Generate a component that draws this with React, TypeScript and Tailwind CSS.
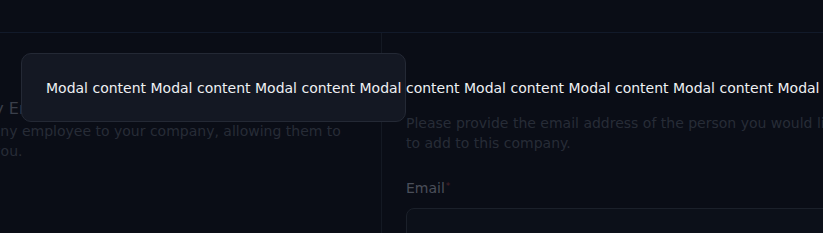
export default function App() {
  const repeated = Array.from({ length: 9 }, () => "Modal content").join(" ");

  return (
    <div className="relative h-[233px] w-full overflow-hidden bg-[#0a0d16] font-['DejaVu_Sans',sans-serif]">
      {/* Top bar */}
      <header className="h-[33px] border-b border-[#121a2a]" />

      {/* Form body */}
      <main className="flex">
        <section className="ml-[-52px] w-[434px] shrink-0 border-r border-[#141923] pr-6 pt-16">
          <h2 className="text-base leading-6 text-[#3a3f4a]">Add by Email</h2>
          <p className="text-sm leading-5 text-[#272c37]">
            Invite any employee to your company, allowing them to assist you.
          </p>
        </section>

        <section className="w-[470px] shrink-0 pl-6 pt-20">
          <p className="w-[440px] text-sm leading-5 text-[#272c37]">
            Please provide the email address of the person you would like to add to this company.
          </p>
          <label className="mt-[25px] block text-sm leading-5 text-[#4a4f5a]">
            Email<sup className="ml-px text-[9px] text-[#4a2229]">*</sup>
          </label>
          <div className="mt-[10px] h-10 rounded-lg border border-[#1b202a] bg-[#0c1019]" />
        </section>
      </main>

      {/* Modal overlay */}
      <div className="absolute left-[21px] top-[53px] flex h-[69px] w-[385px] items-center rounded-[10px] border border-[#242935] bg-[#141823] px-6">
        <span className="whitespace-nowrap text-sm text-[#eef0f3]">{repeated}</span>
      </div>
    </div>
  );
}
